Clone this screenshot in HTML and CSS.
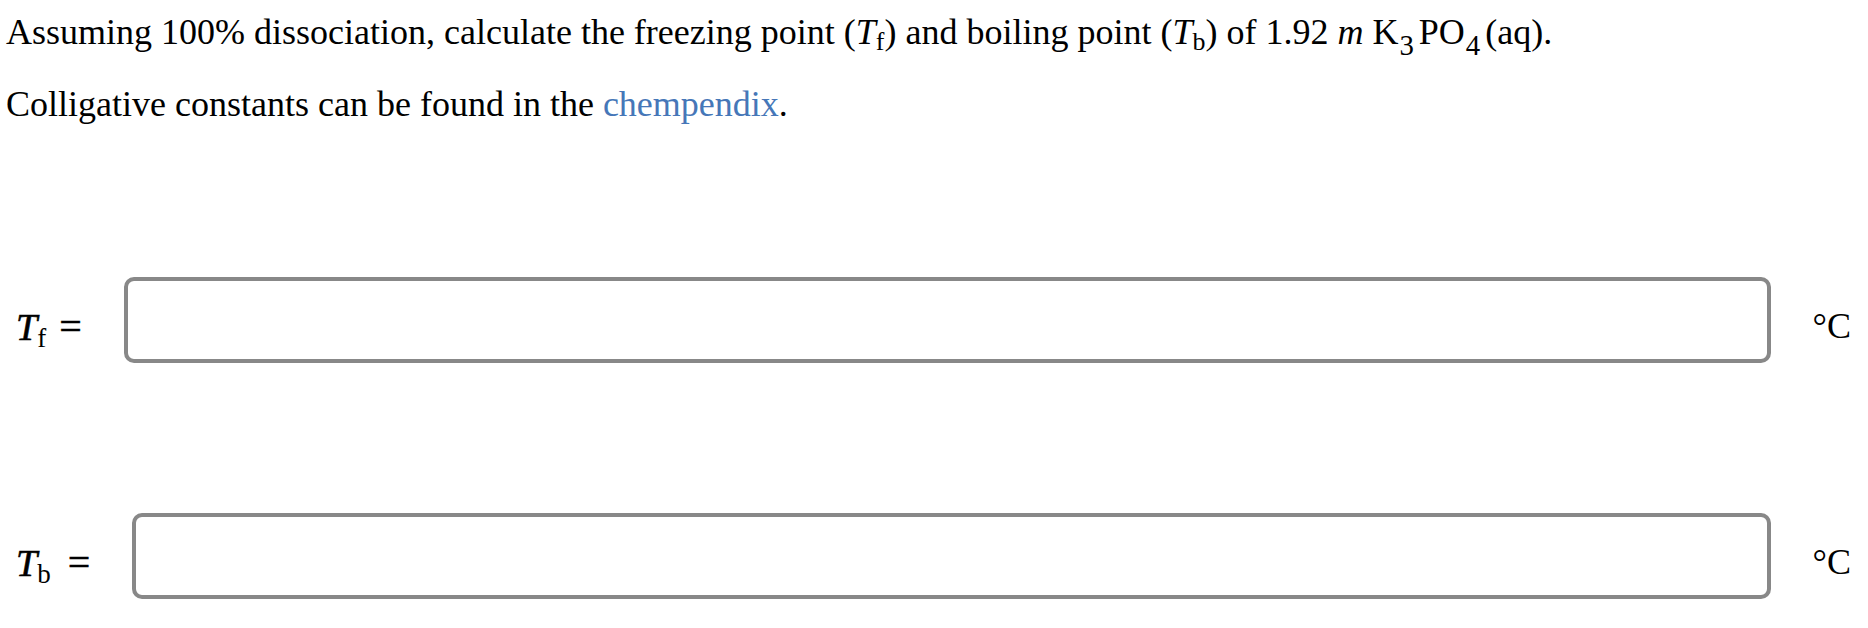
FILE: index.html
```html
<!DOCTYPE html>
<html>
<head>
<meta charset="utf-8">
<link rel="stylesheet" href="styles.css">
</head>
<body>
<div class="page">
  <p class="text">Assuming 100% dissociation, calculate the freezing point (<span class="mi">T</span><sub class="msub">f</sub>) and boiling point (<span class="mi">T</span><sub class="msub">b</sub>) of 1.92 <span class="mi">m</span> K<sub class="chem">3</sub>PO<sub class="chem">4</sub>(aq).</p>
  <p class="text last">Colligative constants can be found in the <a class="link" href="#">chempendix</a>.</p>

  <div class="row row-first">
    <div class="label"><span class="mt">T</span><sub class="lsub">f</sub><span class="eq eq-f">=</span></div>
    <div class="field"><input class="input" type="text"></div>
    <div class="unit">°C</div>
  </div>

  <div class="row row-second">
    <div class="label"><span class="mt">T</span><sub class="lsub">b</sub><span class="eq eq-b">=</span></div>
    <div class="field"><input class="input" type="text"></div>
    <div class="unit">°C</div>
  </div>
</div>
</body>
</html>
```

FILE: styles.css
```css
html, body {
  margin: 0;
  padding: 0;
  background: #ffffff;
}

.page {
  padding: 8px 17px 0 6px;
  font-family: "Liberation Serif", "Times New Roman", serif;
  font-size: 36px;
  color: #000;
}

.text {
  margin: 0 0 24px 0;
  line-height: 48px;
}

.text.last {
  margin-bottom: 0;
}

.mi {
  font-style: italic;
}

.msub {
  font-size: 0.72em;
  vertical-align: -0.22em;
  line-height: 0;
}

.chem {
  font-size: 0.8em;
  vertical-align: -0.38em;
  line-height: 0;
  margin-left: 1px;
  margin-right: 5px;
}

.link {
  color: #4677b8;
  text-decoration: none;
}

.row {
  display: flex;
  align-items: center;
  height: 86px;
}

.row-first {
  margin-top: 149px;
}

.row-second {
  margin-top: 150px;
}

.label {
  padding-left: 10px;
  padding-top: 15px;
  line-height: 40px;
  white-space: nowrap;
}

.mt {
  font-style: italic;
  font-size: 38px;
  -webkit-text-stroke: 0.6px #000;
}

.lsub {
  font-size: 27px;
  vertical-align: -7px;
  line-height: 0;
}

.eq {
  font-size: 40px;
  -webkit-text-stroke: 0.4px #000;
}

.eq-f {
  margin-left: 13px;
}

.eq-b {
  margin-left: 17px;
}

.field {
  flex: 1;
  margin-left: 42px;
  height: 86px;
}

.input {
  box-sizing: border-box;
  display: block;
  width: 100%;
  height: 86px;
  margin: 0;
  border: 4px solid #888888;
  border-radius: 10px;
  background: #ffffff;
  outline: none;
  font-size: 36px;
}

.unit {
  margin-left: 42px;
  padding-top: 11px;
  line-height: 40px;
}
```
